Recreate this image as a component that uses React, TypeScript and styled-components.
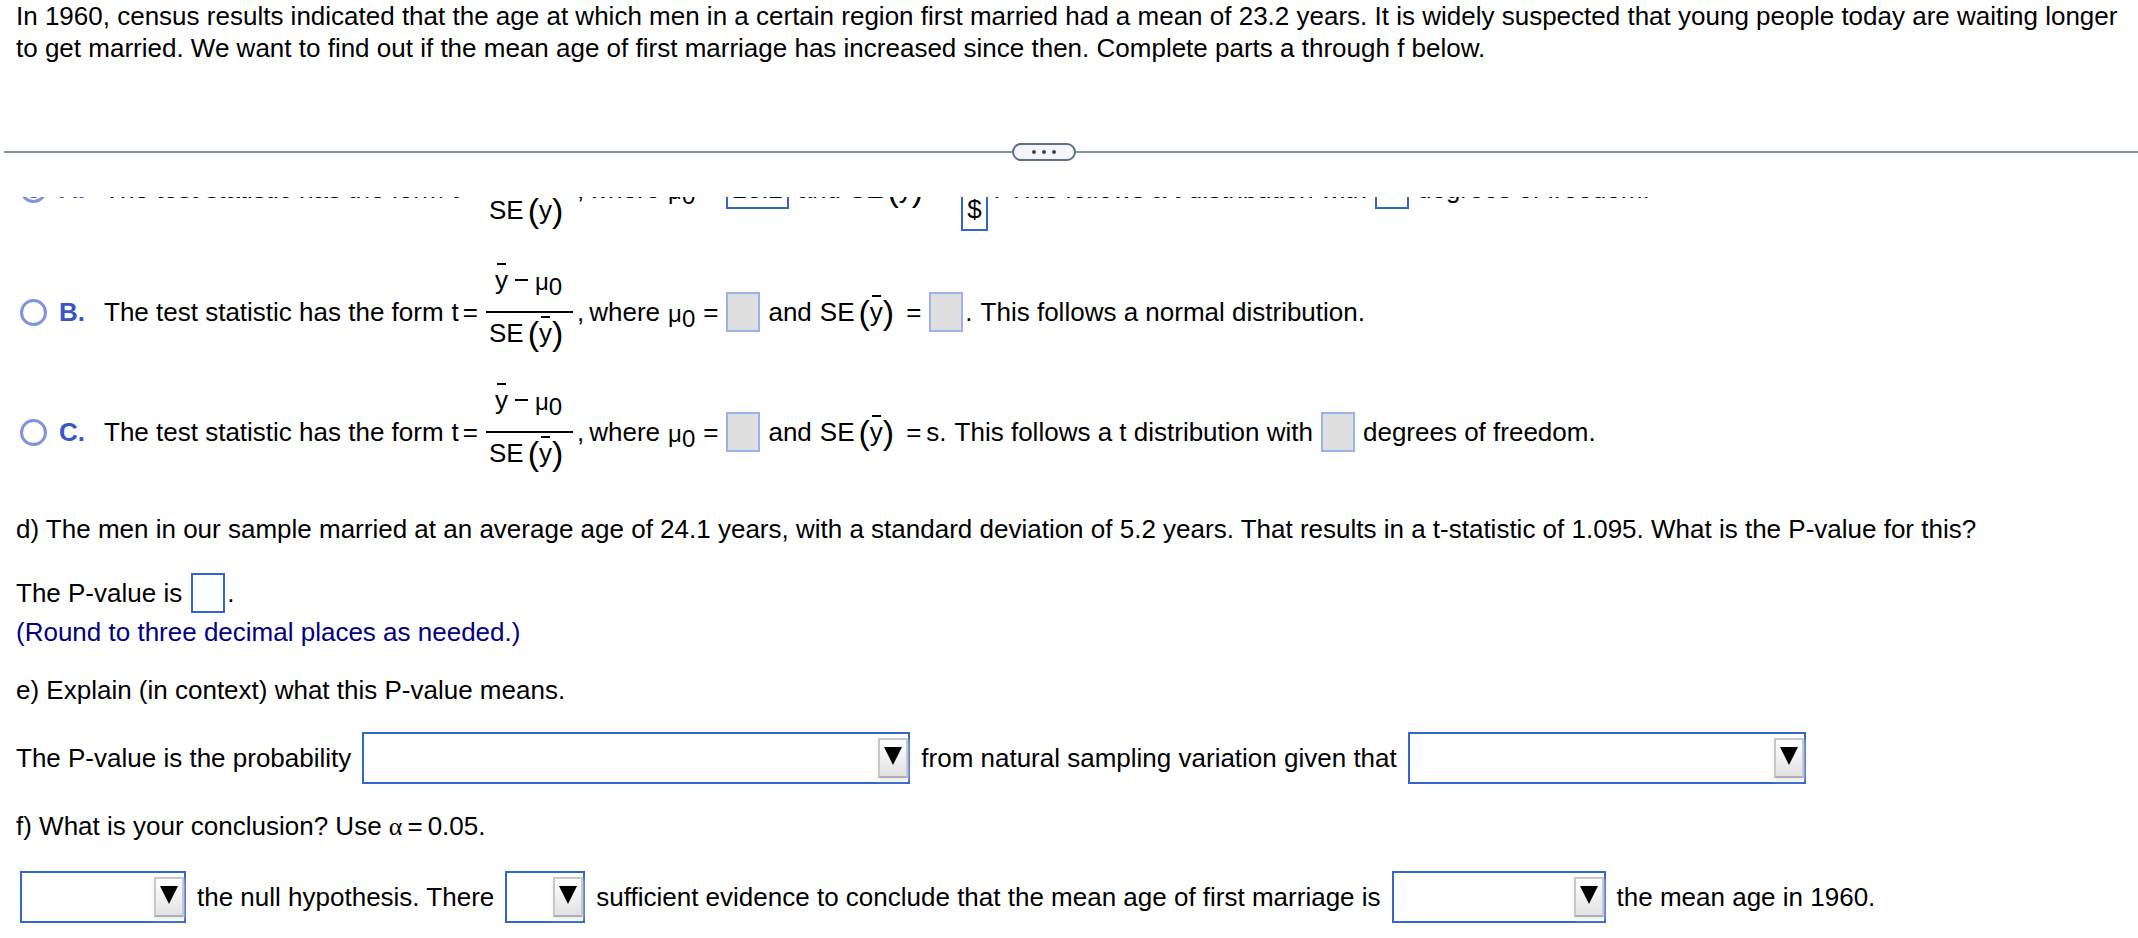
import React, { useState } from "react";
import styled, { createGlobalStyle } from "styled-components";

const GlobalStyle = createGlobalStyle`
  *, *::before, *::after { box-sizing: border-box; }
  body { margin: 0; background: #fff; }
  body, input, select, button {
    font-family: "Liberation Sans", Arial, Helvetica, sans-serif;
    font-size: 26px;
    line-height: 32px;
    color: #000;
  }
`;

const Page = styled.main`
  display: flex;
  flex-direction: column;
  overflow: hidden;
`;

const Intro = styled.p`
  margin: 0;
  padding: 0 16px;
`;

const Divider = styled.div`
  display: flex;
  align-items: center;
  margin: 79px 0 36px 4px;
`;

const Rule = styled.span<{ $grow: number }>`
  flex: ${(p) => p.$grow} 1 0;
  height: 2px;
  background: #8592a6;
`;

const Handle = styled.button`
  display: flex;
  align-items: center;
  justify-content: center;
  gap: 6px;
  width: 64px;
  height: 18px;
  padding: 0;
  border: 2px solid #5f6e80;
  border-radius: 9px;
  background: #f3f5f8;
  cursor: row-resize;
`;

const Dot = styled.span`
  width: 4px;
  height: 4px;
  border-radius: 50%;
  background: #444;
`;

const Viewport = styled.section`
  overflow: hidden;
  padding: 0 16px 12px;
`;

const Choices = styled.div`
  display: flex;
  flex-direction: column;
  margin: -71px 0 -5px 4px;
`;

const Choice = styled.div<{ $tall?: boolean }>`
  display: flex;
  align-items: center;
  height: ${(p) => (p.$tall ? 126 : 120)}px;
  white-space: nowrap;
`;

const Radio = styled.input`
  appearance: none;
  flex: none;
  width: 27px;
  height: 27px;
  margin: 0 12px 0 0;
  border: 3px solid #8093de;
  border-radius: 50%;
  background: #fff;
  &:checked {
    background: radial-gradient(circle, #3a57cc 8px, #fff 9px);
  }
`;

const Letter = styled.label`
  width: 45px;
  font-weight: bold;
  color: #3855cb;
`;

const Phrase = styled.div`
  display: flex;
  align-items: center;
  gap: 8px;
`;

const Pair = styled.span<{ $gap?: number }>`
  display: flex;
  align-items: center;
  gap: ${(p) => p.$gap ?? 5}px;
`;

const Fraction = styled.span`
  display: grid;
  grid-template-rows: 60px 2px 60px;
  width: 87px;
  margin-right: -4px;
`;

const FractionBar = styled.span`
  background: #000;
`;

const Numerator = styled.span`
  display: flex;
  align-items: center;
  gap: 7px;
  padding: 0 0 2px 9px;
`;

const Denominator = styled.span`
  display: flex;
  align-items: flex-start;
  padding: 4px 0 0 3px;
`;

const Mean = styled.span<{ $lift: number }>`
  position: relative;
  &::before {
    content: "";
    position: absolute;
    left: 2px;
    top: ${(p) => p.$lift}px;
    width: 9px;
    height: 2px;
    background: #000;
  }
`;

const Minus = styled.span`
  width: 13px;
  height: 2px;
  background: #000;
`;

const MuSymbol = styled.span`
  display: flex;
  align-items: center;
  padding-top: 4px;
  font-size: 24px;
`;

const Zero = styled.span`
  padding-top: 10px;
`;

const ErrorTerm = styled.span`
  display: flex;
  align-items: center;
  margin-right: 4px;
`;

const Paren = styled.span`
  font-size: 34px;
`;

const ParenGroup = styled.span`
  display: flex;
  align-items: center;
  margin-left: 4px;
`;

const Box = styled.input<{ $width?: number }>`
  width: ${(p) => p.$width ?? 34}px;
  height: 40px;
  padding: 0 4px;
  border: 2px solid #3366cc;
  border-radius: 0;
  background: #fff;
  &:disabled {
    border-color: #99b3e6;
    background: #dfdfdf;
  }
`;

const TallBox = styled(Box)`
  height: 84px;
  padding: 40px 4px 0;
  margin-left: 3px;
`;

const Question = styled.p<{ $after?: number }>`
  margin: 26px 0 ${(p) => p.$after ?? 28}px;
`;

const Alpha = styled.span`
  font-family: "Liberation Serif", "Times New Roman", serif;
`;

const Equals = styled.span`
  margin: 0 5px;
`;

const AnswerRow = styled.div<{ $inset?: boolean; $gap?: number }>`
  display: flex;
  align-items: center;
  gap: ${(p) => p.$gap ?? 11}px;
  padding-left: ${(p) => (p.$inset ? 4 : 0)}px;
  white-space: nowrap;
`;

const Hint = styled.p`
  margin: 3px 0 0;
  color: #000080;
`;

const SelectFrame = styled.span<{ $width: number }>`
  position: relative;
  flex: none;
  width: ${(p) => p.$width}px;
  height: 52px;
`;

const Select = styled.select`
  appearance: none;
  display: block;
  width: 100%;
  height: 100%;
  padding: 0 36px 0 8px;
  border: 2px solid #3366cc;
  border-radius: 0;
  background: #fff;
`;

const Arrow = styled.span`
  position: absolute;
  top: 6px;
  right: 2px;
  display: flex;
  justify-content: center;
  width: 30px;
  height: 40px;
  padding-top: 7px;
  border: 2px solid #c8c8c8;
  border-bottom-color: #b0b0b0;
  background: linear-gradient(#fff, #e2e2e2);
  box-shadow: 0 2px 4px #e8e8e8;
  pointer-events: none;
`;

function Dropdown({ label, width, options }: { label: string; width: number; options: string[] }) {
  return (
    <SelectFrame $width={width}>
      <Select aria-label={label} defaultValue="">
        <option value="" />
        {options.map((o) => (
          <option key={o}>{o}</option>
        ))}
      </Select>
      <Arrow aria-hidden="true">
        <svg width="18" height="18" viewBox="0 0 18 18">
          <path d="M0 0H18L9 18Z" />
        </svg>
      </Arrow>
    </SelectFrame>
  );
}

const Mu = () => (
  <MuSymbol>
    <span>μ</span>
    <Zero>0</Zero>
  </MuSymbol>
);

const StandardError = () => (
  <ErrorTerm>
    <span>SE</span>
    <ParenGroup>
      <Paren>(</Paren>
      <Mean $lift={-1}>y</Mean>
      <Paren>)</Paren>
    </ParenGroup>
  </ErrorTerm>
);

const Statistic = () => (
  <>
    <span>The test statistic has the form</span>
    <Pair $gap={4}>
      <span>t</span>
      <span>=</span>
    </Pair>
    <Fraction>
      <Numerator>
        <Mean $lift={-1}>y</Mean>
        <Minus />
        <Mu />
      </Numerator>
      <FractionBar />
      <Denominator>
        <StandardError />
      </Denominator>
    </Fraction>
    <Pair>
      <span>,</span>
      <span>where</span>
    </Pair>
    <Mu />
    <span>=</span>
  </>
);

export default function App() {
  const [choice, setChoice] = useState("A");
  const radio = (id: string) => (
    <>
      <Radio
        type="radio"
        name="statistic"
        id={`choice-${id}`}
        checked={choice === id}
        onChange={() => setChoice(id)}
      />
      <Letter htmlFor={`choice-${id}`}>{id}.</Letter>
    </>
  );

  return (
    <>
      <GlobalStyle />
      <Page>
        <Intro>
          In 1960, census results indicated that the age at which men in a certain region first
          married had a mean of 23.2 years. It is widely suspected that young people today are
          waiting longer to get married. We want to find out if the mean age of first marriage has
          increased since then. Complete parts a through f below.
        </Intro>

        <Divider>
          <Rule $grow={1008} />
          <Handle type="button" aria-label="Resize panels">
            <Dot />
            <Dot />
            <Dot />
          </Handle>
          <Rule $grow={1062} />
        </Divider>

        <Viewport>
          <Choices role="radiogroup" aria-label="Test statistic">
            <Choice $tall>
              {radio("A")}
              <Phrase>
                <Statistic />
                <Box $width={63} defaultValue="23.2" aria-label="Hypothesized mean" />
                <span>and</span>
                <StandardError />
                <span>=</span>
                <Pair>
                  <TallBox $width={27} defaultValue="$" aria-label="Standard error" />
                  <span>.</span>
                </Pair>
                <span>This follows a t distribution with</span>
                <Box aria-label="Degrees of freedom" />
                <span>degrees of freedom.</span>
              </Phrase>
            </Choice>
            <Choice>
              {radio("B")}
              <Phrase>
                <Statistic />
                <Box disabled aria-label="Hypothesized mean" />
                <span>and</span>
                <StandardError />
                <span>=</span>
                <Pair $gap={2}>
                  <Box disabled aria-label="Standard error" />
                  <span>.</span>
                </Pair>
                <span>This follows a normal distribution.</span>
              </Phrase>
            </Choice>
            <Choice>
              {radio("C")}
              <Phrase>
                <Statistic />
                <Box disabled aria-label="Hypothesized mean" />
                <span>and</span>
                <StandardError />
                <Pair>
                  <span>=</span>
                  <span>s.</span>
                </Pair>
                <span>This follows a t distribution with</span>
                <Box disabled aria-label="Degrees of freedom" />
                <span>degrees of freedom.</span>
              </Phrase>
            </Choice>
          </Choices>

          <Question>
            d) The men in our sample married at an average age of 24.1 years, with a standard
            deviation of 5.2 years. That results in a t-statistic of 1.095. What is the P-value for
            this?
          </Question>
          <AnswerRow $gap={9}>
            <span>The P-value is</span>
            <Pair $gap={2}>
              <Box aria-label="P-value" />
              <span>.</span>
            </Pair>
          </AnswerRow>
          <Hint>(Round to three decimal places as needed.)</Hint>

          <Question $after={26}>e) Explain (in context) what this P-value means.</Question>
          <AnswerRow>
            <span>The P-value is the probability</span>
            <Dropdown
              label="Probability of"
              width={548}
              options={["of getting a result at least this large"]}
            />
            <span>from natural sampling variation given that</span>
            <Dropdown label="Given that" width={398} options={["the mean age is 23.2"]} />
          </AnswerRow>

          <Question>
            f) What is your conclusion? Use <Alpha>α</Alpha>
            <Equals>=</Equals>0.05.
          </Question>
          <AnswerRow $inset>
            <Dropdown label="Decision" width={166} options={["Reject", "Do not reject"]} />
            <span>the null hypothesis. There</span>
            <Dropdown label="Evidence" width={80} options={["is", "is not"]} />
            <span>sufficient evidence to conclude that the mean age of first marriage is</span>
            <Dropdown label="Comparison" width={214} options={["greater than", "less than"]} />
            <span>the mean age in 1960.</span>
          </AnswerRow>
        </Viewport>
      </Page>
    </>
  );
}
